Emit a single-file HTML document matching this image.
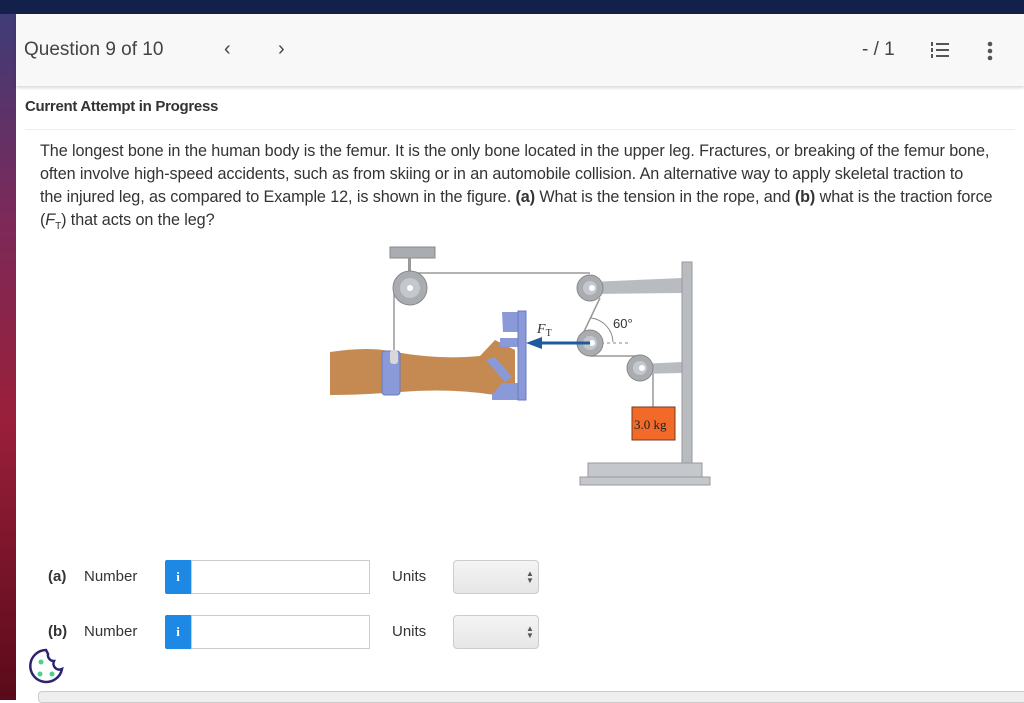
<!DOCTYPE html>
<html><head><meta charset="utf-8"><style>
*{margin:0;padding:0;box-sizing:border-box}
body{width:1024px;height:700px;overflow:hidden;background:#fff;font-family:"Liberation Sans",sans-serif;position:relative;color:#333}
#side{position:absolute;left:0;top:0;width:16px;height:700px;background:linear-gradient(#3a3d7a,#7a2a5a 30%,#9a1f3a 60%,#5a0a1a)}
#top{position:absolute;left:0;top:0;width:1024px;height:14px;background:#13204a}
#hdr{position:absolute;left:16px;top:14px;width:1008px;height:72px;background:#f8f8f8;box-shadow:0 2px 3px rgba(0,0,0,.15)}
#hdr .q{position:absolute;left:8px;top:25px;font-size:19px;color:#444}
#hdr .nav{position:absolute;top:24px;font-size:20px;color:#444}
.a{position:absolute;white-space:nowrap}
.txt{left:40px;font-size:16.2px;color:#333;letter-spacing:-0.1px}
.inp{position:absolute;width:205px;height:34px;border:1px solid #ccc;background:#fff}
.info{position:absolute;width:26px;height:34px;background:#1e88e5;color:#fff;font-weight:bold;font-size:13px;text-align:center;line-height:34px;font-family:"Liberation Serif",serif;border-radius:2px 0 0 2px}
.sel{position:absolute;width:86px;height:34px;border:1px solid #ccc;border-radius:4px;background:linear-gradient(#f4f4f4,#e6e6e6)}
</style></head><body>
<div id="side"></div><div id="top"></div>
<div id="hdr">
<div class="q">Question 9 of 10</div>
<div class="nav" style="left:208px">&lsaquo;</div>
<div class="nav" style="left:262px">&rsaquo;</div>
<div class="nav" style="left:846px;font-size:19px;top:25px">- / 1</div>
<svg style="position:absolute;left:914px;top:27px" width="20" height="18"><g fill="#555"><rect x="6" y="2" width="13" height="2"/><rect x="6" y="8" width="13" height="2"/><rect x="6" y="14" width="13" height="2"/><rect x="1" y="1" width="2" height="4"/><rect x="1" y="7" width="2" height="4"/><rect x="1" y="13" width="2" height="4"/></g></svg>
<svg style="position:absolute;left:970px;top:26px" width="8" height="22"><g fill="#555"><circle cx="4" cy="4" r="2.3"/><circle cx="4" cy="11" r="2.3"/><circle cx="4" cy="18" r="2.3"/></g></svg>
</div>
<div class="a" style="left:25px;top:98px;font-size:15px;font-weight:bold;color:#333;letter-spacing:-0.3px">Current Attempt in Progress</div>
<div style="position:absolute;left:25px;top:129px;width:990px;height:1px;background:#eee"></div>
<div class="a txt" style="top:142px">The longest bone in the human body is the femur. It is the only bone located in the upper leg. Fractures, or breaking of the femur bone,</div>
<div class="a txt" style="top:165px">often involve high-speed accidents, such as from skiing or in an automobile collision. An alternative way to apply skeletal traction to</div>
<div class="a txt" style="top:188px">the injured leg, as compared to Example 12, is shown in the figure. <b>(a)</b> What is the tension in the rope, and <b>(b)</b> what is the traction force</div>
<div class="a txt" style="top:211px">(<i>F</i><sub style="font-size:10px">T</sub>) that acts on the leg?</div>

<svg style="position:absolute;left:320px;top:240px" width="400" height="250">
<rect x="70" y="7" width="45" height="11" fill="#a9adb1" stroke="#888"/>
<rect x="88" y="18" width="3" height="15" fill="#999"/>
<line x1="90" y1="33" x2="270" y2="33" stroke="#999" stroke-width="1.5"/>
<line x1="74" y1="48" x2="74" y2="113" stroke="#999" stroke-width="1.5"/>
<line x1="280" y1="58" x2="260" y2="100" stroke="#999" stroke-width="1.5"/>
<line x1="270" y1="116" x2="320" y2="116" stroke="#999" stroke-width="1.5"/>
<line x1="333" y1="130" x2="333" y2="167" stroke="#999" stroke-width="1.5"/>
<path d="M271 78 A25 25 0 0 1 293 102" fill="none" stroke="#888"/>
<line x1="275" y1="103" x2="310" y2="103" stroke="#888" stroke-dasharray="3,3"/>
<polygon points="270,42 362,38 362,53 270,54" fill="#b8bcc0"/>
<polygon points="320,124 362,122 362,133 320,134" fill="#b8bcc0"/>
<rect x="362" y="22" width="10" height="201" fill="#b8bcc0" stroke="#999"/>
<rect x="268" y="223" width="114" height="14" fill="#c4c8cc" stroke="#999"/>
<rect x="260" y="237" width="130" height="8" fill="#c4c8cc" stroke="#999"/>
<g fill="#a9adb1" stroke="#888"><circle cx="90" cy="48" r="17"/><circle cx="270" cy="48" r="13"/><circle cx="270" cy="103" r="13"/><circle cx="320" cy="128" r="13"/></g>
<g fill="#c4c8cc"><circle cx="90" cy="48" r="10"/><circle cx="270" cy="48" r="7"/><circle cx="270" cy="103" r="7"/><circle cx="320" cy="128" r="7"/></g>
<g fill="#fff"><circle cx="90" cy="48" r="3"/><circle cx="272" cy="48" r="3"/><circle cx="272" cy="103" r="3"/><circle cx="322" cy="128" r="3"/></g>
<path d="M10 112 Q50 106 75 112 Q120 120 160 116 L175 100 L195 110 L195 150 L175 155 Q130 148 80 152 Q40 155 10 155 Z" fill="#c48a52"/>
<rect x="62" y="111" width="18" height="44" rx="3" fill="#8a9ad8" stroke="#6a7ac0"/>
<rect x="70" y="110" width="8" height="14" rx="3" fill="#d8d8d8"/>
<polygon points="166,120 175,117 192,137 185,142" fill="#8a9ad8"/>
<polygon points="172,155 182,143 198,143 198,160 172,160" fill="#8a9ad8"/>
<polygon points="182,72 198,72 198,92 183,92" fill="#8a9ad8"/>
<rect x="180" y="98" width="18" height="9" fill="#8a9ad8"/>
<rect x="198" y="71" width="8" height="89" fill="#8a9ad8" stroke="#6a7ac0"/>
<line x1="270" y1="103" x2="216" y2="103" stroke="#1f5a9e" stroke-width="3"/>
<polygon points="206,103 222,97 222,109" fill="#1f5a9e"/>
<text x="217" y="93" font-family="Liberation Serif" font-style="italic" font-size="14" fill="#333">F<tspan font-style="normal" font-size="10" dy="3">T</tspan></text>
<text x="293" y="88" font-size="13" fill="#333">60°</text>
<rect x="312" y="167" width="43" height="33" fill="#f26a2a" stroke="#7a3a1a"/>
<text x="314" y="189" font-family="Liberation Serif" font-size="13" fill="#222">3.0 kg</text>
</svg>

<div class="a" style="left:48px;top:568px;font-size:15px"><b>(a)</b></div>
<div class="a" style="left:84px;top:568px;font-size:15px">Number</div>
<div class="info" style="left:165px;top:560px">i</div><div class="inp" style="top:560px;left:191px;width:179px"></div>
<div class="a" style="left:392px;top:568px;font-size:15px">Units</div>
<div class="sel" style="left:453px;top:560px"></div>
<div class="a" style="left:48px;top:623px;font-size:15px"><b>(b)</b></div>
<div class="a" style="left:84px;top:623px;font-size:15px">Number</div>
<div class="info" style="left:165px;top:615px">i</div><div class="inp" style="left:191px;top:615px;width:179px"></div>
<div class="a" style="left:392px;top:623px;font-size:15px">Units</div>
<div class="sel" style="left:453px;top:615px"></div>
<div class="a" style="left:526px;top:570px;font-size:8px;color:#555;line-height:7px">▲<br>▼</div>
<div class="a" style="left:526px;top:625px;font-size:8px;color:#555;line-height:7px">▲<br>▼</div>
<svg style="position:absolute;left:26px;top:645px" width="40" height="45"><path d="M20 5 A16 16 0 1 0 36 24 A6 6 0 0 1 28 16 A6 6 0 0 1 22 9 Z" fill="#fff" stroke="#2b2570" stroke-width="2.5"/><g fill="#4cd08a"><circle cx="15" cy="17" r="2.5"/><circle cx="14" cy="29" r="2.5"/><circle cx="26" cy="29" r="2.5"/></g></svg>
<div style="position:absolute;left:38px;top:691px;width:990px;height:12px;border:1px solid #ccc;border-radius:4px;background:#eee"></div>
</body></html>
